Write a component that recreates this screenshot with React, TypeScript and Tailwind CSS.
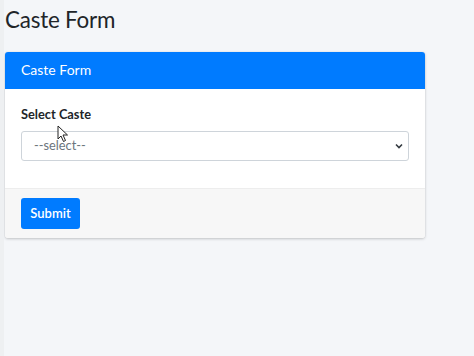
import React from "react";

export default function App() {
  return (
    <div
      className="relative min-h-screen w-full bg-[#f4f6f9] text-[#212529]"
      style={{ fontFamily: "Lato, 'Noto Sans', sans-serif" }}
    >
      <div className="absolute left-0 top-0 h-full w-[4px] bg-[#eef0f2]" />
      <div className="px-[5px] pt-[7px]">
        <h3 className="m-0 text-[22.4px] leading-[1.2] font-normal tracking-[-0.2px]">Caste Form</h3>
        <div className="mt-[18px] w-[420px] rounded-[3px] bg-white shadow-[0_0_1px_rgba(0,0,0,0.125),0_1px_3px_rgba(0,0,0,0.2)]">
          <div className="rounded-t-[3px] bg-[#007bff] px-[16px] py-[9.6px] text-[14px] leading-[18px] text-white">
            Caste Form
          </div>
          <div className="px-[16px] pt-[16px] pb-[14px]">
            <div className="mb-[12.8px]">
              <label className="mb-[6.4px] block text-[12.8px] font-bold leading-[19.2px]">
                Select Caste
              </label>
              <div className="relative flex h-[30.4px] w-full items-center rounded-[3px] border border-[#ced4da] bg-white pl-[12px] text-[12.8px] text-[#6c757d]">
                --select--
                <svg
                  className="absolute right-[5px] top-1/2 -translate-y-1/2"
                  width="8"
                  height="6"
                  viewBox="0 0 8 6"
                >
                  <path d="M1 1.5 L4 4.5 L7 1.5" fill="none" stroke="#343a40" strokeWidth="1.6" />
                </svg>
              </div>
            </div>
          </div>
          <div className="rounded-b-[3px] border-t border-[rgba(0,0,0,0.04)] bg-[#f7f7f7] px-[16px] py-[9.6px]">
            <button className="flex h-[30.4px] w-[59px] items-center justify-center rounded-[3px] bg-[#007bff] text-[13px] font-semibold text-white">
              Submit
            </button>
          </div>
        </div>
      </div>
      <svg
        className="absolute left-[57px] top-[125px]"
        width="12"
        height="18"
        viewBox="0 0 12 18"
      >
        <path
          d="M1 1 L1 14 L4 11 L6.5 16.5 L8.5 15.5 L6 10 L10.5 10 Z"
          fill="white"
          stroke="#222"
          strokeWidth="1"
          strokeLinejoin="round"
        />
      </svg>
    </div>
  );
}
